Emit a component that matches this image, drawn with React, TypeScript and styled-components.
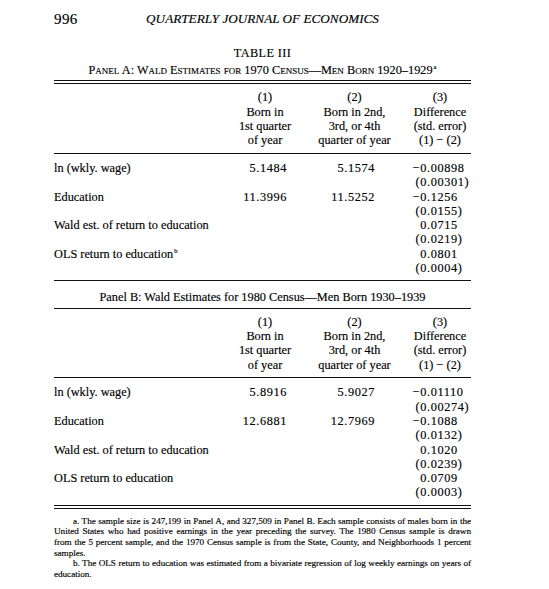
import React from "react";
import styled, { createGlobalStyle } from "styled-components";

const GlobalStyle = createGlobalStyle`
  html, body {
    margin: 0;
    padding: 0;
    background: #fff;
  }
  body {
    font-family: "Liberation Serif", "Times New Roman", serif;
    color: #000;
    -webkit-text-stroke: 0.15px #000;
  }
`;

type Rule = "none" | "single" | "double";

const ruleCss = (r: Rule) =>
  r === "double" ? "4px double #111" : r === "single" ? "1px solid #111" : "none";

const Page = styled.div`
  width: 417px;
  padding: 10px 0 0 54px;
`;

const RunningHead = styled.header`
  display: grid;
  grid-template-columns: 1fr auto 1fr;
  align-items: center;
  line-height: 18px;
`;

const PageNo = styled.span`
  font-size: 15px;
  letter-spacing: 0.4px;
`;

const Journal = styled.span`
  font-size: 13.2px;
  font-style: italic;
`;

const TableTitle = styled.div`
  margin-top: 18px;
  text-align: center;
  font-size: 12.3px;
  line-height: 14px;
  letter-spacing: 0.4px;
`;

const PanelCaption = styled.div<{ $smallCaps?: boolean; $top: number }>`
  margin: ${(p) => p.$top}px 0 3px;
  text-align: center;
  font-size: 12.3px;
  line-height: 14.3px;
  font-variant: ${(p) => (p.$smallCaps ? "small-caps" : "normal")};
`;

const Sup = styled.sup`
  font-size: 6.5px;
  font-variant: normal;
  line-height: 0;
  vertical-align: 5px;
  margin-left: 1px;
`;

const Panel = styled.section<{ $top: Rule; $bottom: Rule }>`
  border-top: ${(p) => ruleCss(p.$top)};
  border-bottom: ${(p) => ruleCss(p.$bottom)};
  font-size: 12.3px;
  line-height: 14.3px;
`;

const Grid = styled.div`
  display: grid;
  grid-template-columns: 176px 70px 109px 62px;
`;

const HeadRow = styled(Grid)`
  padding: 6px 0 5.5px;
  border-bottom: 1px solid #111;
`;

const HeadCell = styled.div`
  text-align: center;
  white-space: nowrap;
`;

const HeadLine = styled.div``;

const Body = styled.div`
  padding: 7px 0 5px;
`;

const DataRow = styled(Grid)``;

const Label = styled.div`
  white-space: nowrap;
`;

const Num = styled.div<{ $padRight: number }>`
  text-align: right;
  letter-spacing: 0.6px;
  padding-right: ${(p) => p.$padRight}px;
`;

const DiffCell = styled.div``;

const DecLine = styled.div`
  display: flex;
  white-space: nowrap;
  letter-spacing: 0.6px;
`;

const IntPart = styled.span`
  width: 18px;
  flex: none;
  text-align: right;
`;

const Notes = styled.div`
  margin-top: 7px;
  font-size: 9.2px;
  line-height: 10.6px;
  letter-spacing: -0.05px;
`;

const NoteLine = styled.div<{ $indent?: boolean; $last?: boolean }>`
  white-space: nowrap;
  text-align: justify;
  text-align-last: ${(p) => (p.$last ? "left" : "justify")};
  padding-left: ${(p) => (p.$indent ? "19px" : "0")};
`;

interface Row {
  label: string;
  note?: string;
  c1?: string;
  c2?: string;
  diff: [string, string];
}

const heads: string[][] = [
  ["(1)", "Born in", "1st quarter", "of year"],
  ["(2)", "Born in 2nd,", "3rd, or 4th", "quarter of year"],
  ["(3)", "Difference", "(std. error)", "(1) \u2212 (2)"],
];

const panelA: Row[] = [
  { label: "ln (wkly. wage)", c1: "5.1484", c2: "5.1574", diff: ["\u22120.00898", "(0.00301)"] },
  { label: "Education", c1: "11.3996", c2: "11.5252", diff: ["\u22120.1256", "(0.0155)"] },
  { label: "Wald est. of return to education", diff: ["0.0715", "(0.0219)"] },
  { label: "OLS return to education", note: "b", diff: ["0.0801", "(0.0004)"] },
];

const panelB: Row[] = [
  { label: "ln (wkly. wage)", c1: "5.8916", c2: "5.9027", diff: ["\u22120.01110", "(0.00274)"] },
  { label: "Education", c1: "12.6881", c2: "12.7969", diff: ["\u22120.1088", "(0.0132)"] },
  { label: "Wald est. of return to education", diff: ["0.1020", "(0.0239)"] },
  { label: "OLS return to education", diff: ["0.0709", "(0.0003)"] },
];

const notes: { text: string; indent?: boolean; last?: boolean }[] = [
  {
    text: "a. The sample size is 247,199 in Panel A, and 327,509 in Panel B. Each sample consists of males born in the",
    indent: true,
  },
  { text: "United States who had positive earnings in the year preceding the survey. The 1980 Census sample is drawn" },
  { text: "from the 5 percent sample, and the 1970 Census sample is from the State, County, and Neighborhoods 1 percent" },
  { text: "samples.", last: true },
  {
    text: "b. The OLS return to education was estimated from a bivariate regression of log weekly earnings on years of",
    indent: true,
  },
  { text: "education.", last: true },
];

// split at the decimal point so the third column lines up on it
const Decimal: React.FC<{ value: string }> = ({ value }) => {
  const dot = value.indexOf(".");
  return (
    <DecLine>
      <IntPart>{value.slice(0, dot)}</IntPart>
      <span>{value.slice(dot)}</span>
    </DecLine>
  );
};

const PanelTable: React.FC<{ rows: Row[]; top: Rule; bottom: Rule }> = ({ rows, top, bottom }) => (
  <Panel $top={top} $bottom={bottom}>
    <HeadRow>
      <div />
      {heads.map((lines, i) => (
        <HeadCell key={i}>
          {lines.map((l) => (
            <HeadLine key={l}>{l}</HeadLine>
          ))}
        </HeadCell>
      ))}
    </HeadRow>
    <Body>
      {rows.map((r) => (
        <DataRow key={r.label}>
          <Label>
            {r.label}
            {r.note && <Sup>{r.note}</Sup>}
          </Label>
          <Num $padRight={13}>{r.c1}</Num>
          <Num $padRight={34}>{r.c2}</Num>
          <DiffCell>
            <Decimal value={r.diff[0]} />
            <Decimal value={r.diff[1]} />
          </DiffCell>
        </DataRow>
      ))}
    </Body>
  </Panel>
);

export default function App() {
  return (
    <>
      <GlobalStyle />
      <Page>
        <RunningHead>
          <PageNo>996</PageNo>
          <Journal>QUARTERLY JOURNAL OF ECONOMICS</Journal>
          <span />
        </RunningHead>
        <TableTitle>TABLE III</TableTitle>
        <PanelCaption $smallCaps $top={3}>
          Panel A: Wald Estimates for 1970 Census{"\u2014"}Men Born 1920{"\u2013"}1929
          <Sup>a</Sup>
        </PanelCaption>
        <PanelTable rows={panelA} top="double" bottom="single" />
        <PanelCaption $top={9}>
          Panel B: Wald Estimates for 1980 Census{"\u2014"}Men Born 1930{"\u2013"}1939
        </PanelCaption>
        <PanelTable rows={panelB} top="single" bottom="double" />
        <Notes>
          {notes.map((n) => (
            <NoteLine key={n.text} $indent={n.indent} $last={n.last}>
              {n.text}
            </NoteLine>
          ))}
        </Notes>
      </Page>
    </>
  );
}
